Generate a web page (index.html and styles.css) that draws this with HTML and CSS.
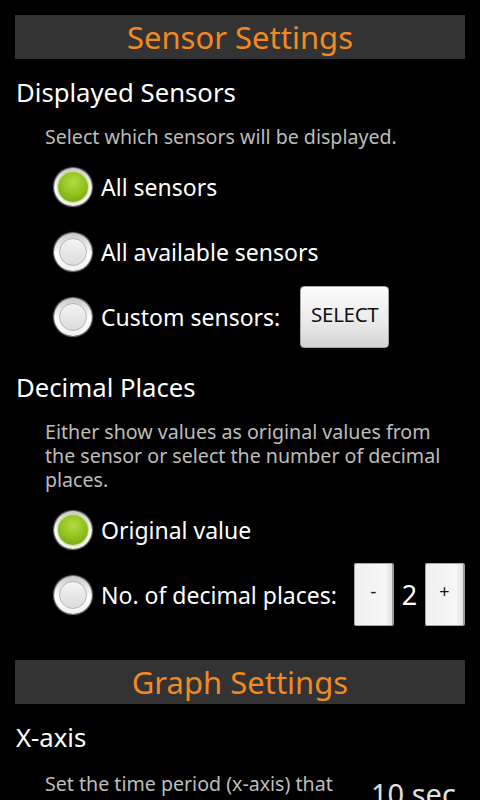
FILE: index.html
```html
<!DOCTYPE html>
<html>
<head>
<meta charset="utf-8">
<link rel="stylesheet" href="styles.css">
</head>
<body>
<div class="page">
  <div class="bar">Sensor Settings</div>

  <div class="title">Displayed Sensors</div>
  <div class="desc">Select which sensors will be displayed.</div>
  <div class="group">
    <div class="row"><span class="radio on"></span><span class="label">All sensors</span></div>
    <div class="row"><span class="radio"></span><span class="label">All available sensors</span></div>
    <div class="row"><span class="radio"></span><span class="label">Custom sensors:</span><span class="btn select">SELECT</span></div>
  </div>

  <div class="title t2">Decimal Places</div>
  <div class="desc">Either show values as original values from the sensor or select the number of decimal places.</div>
  <div class="group">
    <div class="row"><span class="radio on"></span><span class="label">Original value</span></div>
    <div class="row"><span class="radio"></span><span class="label">No. of decimal places:</span>
      <span class="stepper"><span class="btn step">-</span><span class="num">2</span><span class="btn step">+</span></span>
    </div>
  </div>

  <div class="bar bar2">Graph Settings</div>

  <div class="title">X-axis</div>
  <div class="split">
    <div class="desc flexdesc">Set the time period (x-axis) that will be displayed on the graph.</div>
    <div class="value">10 sec</div>
  </div>
</div>
</body>
</html>
```

FILE: styles.css
```css
html, body {
  margin: 0;
  padding: 0;
  background: #000;
  height: 800px;
  overflow: hidden;
}
body {
  font-family: "Noto Sans", "Open Sans", "DejaVu Sans", sans-serif;
  color: #fff;
}
.page {
  padding: 15px 15px 0 15px;
}
.bar {
  height: 44px;
  line-height: 44px;
  background: #333333;
  color: #f18a22;
  font-size: 31px;
  text-align: center;
}
.bar2 {
  margin-top: 33px;
}
.title {
  margin-top: 17px;
  padding-left: 1px;
  font-size: 25.7px;
  line-height: 34px;
  color: #fff;
}
.t2 {
  margin-top: 22px;
}
.desc {
  margin-top: 15px;
  padding-left: 30px;
  font-size: 19.6px;
  line-height: 24px;
  color: #bdbdbd;
}
.group {
  margin-top: 5px;
  padding-left: 38px;
}
.row {
  height: 65px;
  display: flex;
  align-items: center;
}
.radio {
  position: relative;
  width: 38px;
  height: 38px;
  border-radius: 50%;
  background: linear-gradient(#c9c9c9, #ffffff 55%, #f0f0f0);
  box-shadow: 0 0 1px 1px #777;
  flex: none;
  margin-left: 1px;
}
.radio::after {
  content: "";
  position: absolute;
  left: 5px;
  top: 5px;
  width: 26px;
  height: 26px;
  border-radius: 50%;
  border: 1px solid #b5b5b5;
  background: linear-gradient(#f4f4f4, #dcdcdc);
}
.radio.on::after {
  left: 4px;
  top: 4px;
  width: 30px;
  height: 30px;
  border: none;
  background: radial-gradient(circle at 50% 35%, #b4dc44 0%, #93c521 45%, #6e9f10 100%);
  box-shadow: 0 0 1px 1px #c8e08a;
}
.label {
  margin-left: 9px;
  font-size: 23px;
  color: #fff;
}
.btn {
  display: flex;
  align-items: center;
  justify-content: center;
  background: linear-gradient(#fdfdfd, #e9e9e9 60%, #d4d4d4);
  border: 1px solid #a8a8a8;
  border-radius: 4px;
  color: #111;
  box-sizing: border-box;
}
.select {
  margin-left: 20px;
  width: 89px;
  height: 62px;
  font-size: 20.5px;
  letter-spacing: -0.3px;
  padding-bottom: 6px;
}
.stepper {
  display: flex;
  align-items: center;
  margin-left: 17px;
}
.step {
  width: 40px;
  height: 63px;
  font-size: 18px;
  border-radius: 2px;
  border-right: 2px solid #9a9a9a;
  padding-bottom: 8px;
  background: linear-gradient(90deg, #efefef, #f7f7f7 80%, #e0e0e0);
}
.num {
  width: 31px;
  text-align: center;
  font-size: 27px;
  color: #fff;
}
.split {
  display: flex;
  align-items: flex-start;
}
.flexdesc {
  width: 290px;
  flex: none;
  margin-top: 16px;
  line-height: 26px;
}
.value {
  margin-left: 36px;
  margin-top: 22px;
  font-size: 29px;
  line-height: 34px;
  color: #e0e0e0;
}
```
